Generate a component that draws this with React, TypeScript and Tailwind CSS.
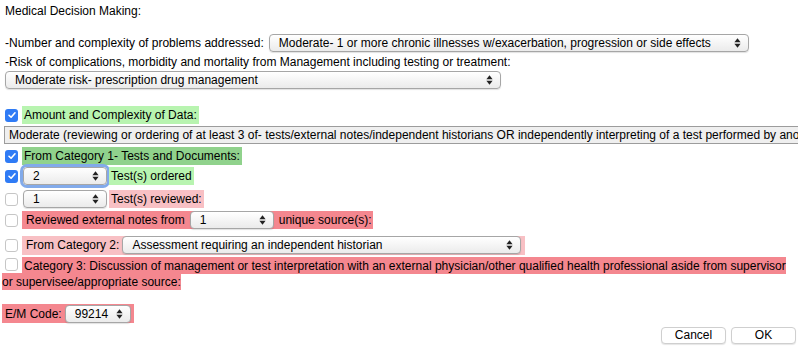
import clsx from 'clsx';

const GREEN_LIGHT = 'bg-[#b8f4b0]';
const GREEN_DARK = 'bg-[#90d28c]';
const PINK_LIGHT = 'bg-[#f8c0c4]';
const PINK_DARK = 'bg-[#f4878f]';

function Arrows() {
  return (
    <svg viewBox="0 0 7 10" className="h-[10px] w-[7px] shrink-0">
      <path d="M0.4 4.2 3.5 0.2 6.6 4.2Z" fill="#222" />
      <path d="M0.4 5.8 3.5 9.8 6.6 5.8Z" fill="#222" />
    </svg>
  );
}

interface SelectProps {
  value: string;
  className?: string;
  focused?: boolean;
}

function Select({ value, className, focused }: SelectProps) {
  return (
    <div
      className={clsx(
        'flex h-[18px] shrink-0 items-center rounded-[4px] border border-[#a6a6a6] pl-[9px] pr-[7px]',
        'bg-linear-to-b from-white to-[#ebebeb] shadow-[0_1px_1px_rgba(0,0,0,0.12)]',
        focused && 'ring-[3px] ring-[#82aaea]',
        className
      )}
    >
      <span className="flex-1 truncate leading-[16px]">{value}</span>
      <Arrows />
    </div>
  );
}

function Check({ checked }: { checked?: boolean }) {
  if (checked) {
    return (
      <span className="inline-flex h-[13px] w-[13px] shrink-0 items-center justify-center rounded-[3px] bg-[#2f7bf5] align-middle">
        <svg viewBox="0 0 12 12" className="h-[10px] w-[10px]">
          <path
            d="M2.4 6.3 4.9 8.7 9.6 3.3"
            fill="none"
            stroke="white"
            strokeWidth="1.9"
            strokeLinecap="round"
            strokeLinejoin="round"
          />
        </svg>
      </span>
    );
  }
  return (
    <span className="inline-block h-[13px] w-[13px] shrink-0 rounded-[3px] border border-[#c6c6c6] bg-white align-middle" />
  );
}

export default function App() {
  return (
    <div
      className="w-[798px] h-[359px] overflow-hidden bg-white text-[12px] text-black"
      style={{ fontFamily: '"Liberation Sans", Arial, sans-serif' }}
    >
      <div className="mt-[2px] flex h-[18px] items-center pl-[5px]">Medical Decision Making:</div>

      {/* Problems */}
      <div className="mt-[14px] flex h-[18px] items-center pl-[5px]">
        <span>-Number and complexity of problems addressed:</span>
        <Select
          className="ml-[5px] w-[480px]"
          value="Moderate- 1 or more chronic illnesses w/exacerbation, progression or side effects"
        />
      </div>
      <div className="flex h-[19px] items-center pl-[5px]">
        -Risk of complications, morbidity and mortality from Management including testing or treatment:
      </div>
      <div className="flex h-[18px] items-center pl-[5px]">
        <Select className="w-[496px]" value="Moderate risk- prescription drug management" />
      </div>

      {/* Data */}
      <div className="mt-[17px] flex h-[18px] items-center pl-[5px]">
        <Check checked />
        <span className={clsx('ml-[4px] flex h-[18px] items-center px-[2px]', GREEN_LIGHT)}>
          Amount and Complexity of Data:
        </span>
      </div>
      <div className="mt-[2px] flex h-[18px] items-center pl-[4px]">
        <div className="flex h-[18px] w-[794px] shrink-0 items-center overflow-hidden border-y border-l border-[#9c9c9c] bg-[#efefef] pl-[4px]">
          <span className="whitespace-nowrap">
            Moderate (reviewing or ordering of at least 3 of- tests/external notes/independent historians OR independently interpreting of a test performed by another physician)
          </span>
        </div>
      </div>
      <div className="mt-[3px] flex h-[18px] items-center pl-[5px]">
        <Check checked />
        <span className={clsx('ml-[4px] flex h-[18px] items-center px-[2px]', GREEN_DARK)}>
          From Category 1- Tests and Documents:
        </span>
      </div>
      <div className="mt-[2px] flex h-[18px] items-center pl-[5px]">
        <Check checked />
        <Select focused className="ml-[5px] w-[84px]" value="2" />
        <span className={clsx('ml-[2px] flex h-[18px] items-center px-[2px]', GREEN_LIGHT)}>
          Test(s) ordered
        </span>
      </div>
      <div className="mt-[5px] flex h-[18px] items-center pl-[5px]">
        <Check />
        <Select className="ml-[5px] w-[84px]" value="1" />
        <span className={clsx('ml-[2px] flex h-[18px] items-center px-[2px]', PINK_LIGHT)}>
          Test(s) reviewed:
        </span>
      </div>
      <div className="mt-[3px] flex h-[18px] items-center pl-[5px]">
        <Check />
        <span className={clsx('ml-[4px] flex h-[18px] items-center pl-[4px] pr-[2px]', PINK_DARK)}>
          <span>Reviewed external notes from</span>
          <Select className="mx-[5px] w-[84px]" value="1" />
          <span>unique source(s):</span>
        </span>
      </div>
      <div className="mt-[7px] flex h-[18px] items-center pl-[5px]">
        <Check />
        <span className={clsx('ml-[4px] flex h-[19px] items-center pl-[4px] pr-[4px]', PINK_LIGHT)}>
          <span>From Category 2:</span>
          <Select className="ml-[3px] w-[399px]" value="Assessment requiring an independent historian" />
        </span>
      </div>

      {/* Category 3 */}
      <div className="mt-[3px] pl-[2px] leading-[16px]">
        <span className="ml-[3px] mr-[4px] inline-block -translate-y-[1px]">
          <Check />
        </span>
        <span className={clsx('box-decoration-clone py-[1.5px] pl-[2px]', PINK_DARK)}>
          Category 3: Discussion of management or test interpretation with an external physician/other qualified health professional aside from supervisor
        </span>
        <br />
        <span className={clsx('py-[1.5px]', PINK_DARK)}>or supervisee/appropriate source:</span>
      </div>

      {/* E/M */}
      <div className="mt-[15px] flex h-[19px] items-center pl-[2px]">
        <span className={clsx('flex h-[19px] items-center pl-[3px] pr-[3px]', PINK_DARK)}>
          <span>E/M Code:</span>
          <Select className="ml-[3px] w-[66px]" value="99214" />
        </span>
      </div>

      {/* Actions */}
      <div className="mt-[4px] flex justify-end gap-[5px] pr-[2px]">
        <button className="h-[17px] w-[65px] rounded-[4px] border border-[#cfcfcf] bg-white text-[12px] leading-[15px] shadow-[0_1px_1px_rgba(0,0,0,0.1)]">
          Cancel
        </button>
        <button className="h-[17px] w-[65px] rounded-[4px] border border-[#cfcfcf] bg-white text-[12px] leading-[15px] shadow-[0_1px_1px_rgba(0,0,0,0.1)]">
          OK
        </button>
      </div>
    </div>
  );
}
